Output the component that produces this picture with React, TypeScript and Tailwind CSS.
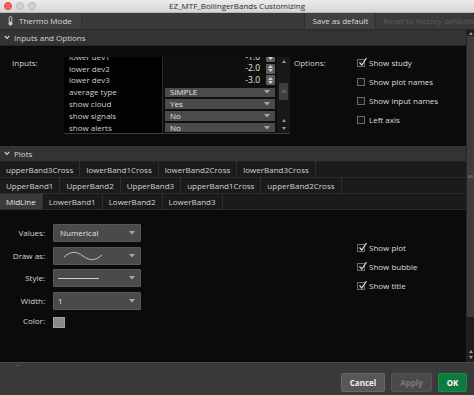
import { ReactNode } from 'react';

type InputRow = { name: string; num?: string; sel?: string };

const inputs: InputRow[] = [
  { name: 'lower dev1', num: '-1.0' },
  { name: 'lower dev2', num: '-2.0' },
  { name: 'lower dev3', num: '-3.0' },
  { name: 'average type', sel: 'SIMPLE' },
  { name: 'show cloud', sel: 'Yes' },
  { name: 'show signals', sel: 'No' },
  { name: 'show alerts', sel: 'No' },
];

const tabRows = [
  ['upperBand3Cross', 'lowerBand1Cross', 'lowerBand2Cross', 'lowerBand3Cross'],
  ['UpperBand1', 'UpperBand2', 'UpperBand3', 'upperBand1Cross', 'upperBand2Cross'],
  ['MidLine', 'LowerBand1', 'LowerBand2', 'LowerBand3'],
];

function Caret() {
  return (
    <svg width="6" height="4" viewBox="0 0 6 4" className="shrink-0">
      <path d="M0 0 L6 0 L3 3.5 Z" fill="#a8a8a8" />
    </svg>
  );
}

function Chevron() {
  return (
    <svg width="6" height="5" viewBox="0 0 6 5" className="shrink-0">
      <path d="M0.8 1 L3 3.4 L5.2 1" stroke="#cfcfcf" strokeWidth="1.3" fill="none" />
    </svg>
  );
}

function Check({ on, label }: { on?: boolean; label: string }) {
  return (
    <div className="flex items-center h-[19px] gap-[4px]">
      <div className="relative w-[8px] h-[8px] border border-[#6a6a6a] bg-[#141414]">
        {on && (
          <svg width="10" height="10" viewBox="0 0 10 10" className="absolute -top-[3px] left-0">
            <path d="M1.5 5.5 L3.8 8 L8.5 1" stroke="#d8d8d8" strokeWidth="1.2" fill="none" />
          </svg>
        )}
      </div>
      <span className="text-[#dcdcdc]">{label}</span>
    </div>
  );
}

function Section({ title }: { title: string }) {
  return (
    <div className="h-[16px] bg-[#333333] flex items-center gap-[4px] pl-[4px] text-[#d6d6d6] border-b border-[#262626]">
      <Chevron />
      <span>{title}</span>
    </div>
  );
}

function Select({ children }: { children: ReactNode }) {
  return (
    <div className="w-[88px] h-[18px] bg-[#4a4a4a] border border-[#575757] rounded-[1px] flex items-center justify-between pl-[6px] pr-[5px] text-[#e2e2e2]">
      <div className="flex items-center">{children}</div>
      <Caret />
    </div>
  );
}

function Field({ label, children }: { label: string; children: ReactNode }) {
  return (
    <div className="flex items-center">
      <span className="w-[45px] text-right text-[#d6d6d6]">{label}</span>
      <div className="ml-[8px]">{children}</div>
    </div>
  );
}

function Spinner() {
  return (
    <div className="w-[9px] h-[10px] bg-[#5d5d5d] rounded-[1px] flex flex-col items-center justify-center gap-[1px]">
      <svg width="5" height="3" viewBox="0 0 5 3"><path d="M0 3 L5 3 L2.5 0 Z" fill="#d0d0d0" /></svg>
      <svg width="5" height="3" viewBox="0 0 5 3"><path d="M0 0 L5 0 L2.5 3 Z" fill="#d0d0d0" /></svg>
    </div>
  );
}

export default function App() {
  return (
    <div className="w-[474px] h-[395px] overflow-hidden bg-[#0b0b0b] flex flex-col font-['Open_Sans','DejaVu_Sans',sans-serif] text-[8px] leading-none">
      {/* window title */}
      <div className="h-[13px] bg-gradient-to-b from-[#ececec] to-[#d6d6d6] border-b border-[#b8b8b8] flex items-center relative">
        <div className="flex gap-[4px] pl-[4px] relative z-10">
          <div className="w-[8px] h-[8px] rounded-full bg-[#fc5f57] border border-[#e0443e]" />
          <div className="w-[8px] h-[8px] rounded-full bg-[#d0d0d0] border border-[#bcbcbc]" />
          <div className="w-[8px] h-[8px] rounded-full bg-[#d0d0d0] border border-[#bcbcbc]" />
        </div>
        <div className="absolute inset-0 flex items-center justify-center text-[#2c2c2c]">
          EZ_MTF_BollingerBands Customizing
        </div>
      </div>

      {/* toolbar */}
      <div className="h-[17px] bg-[#3a3a3a] flex items-center border-b border-[#2a2a2a]">
        <div className="h-full flex items-center gap-[6px] pl-[8px] pr-[9px] bg-[#404040] border-r border-[#2e2e2e] text-[#dadada]">
          <svg width="5" height="10" viewBox="0 0 5 10">
            <rect x="1.2" y="0.5" width="2.6" height="6" rx="1.3" fill="none" stroke="#cfcfcf" strokeWidth="0.9" />
            <circle cx="2.5" cy="7.6" r="2" fill="#cfcfcf" />
          </svg>
          <span>Thermo Mode</span>
        </div>
        <div className="flex-1" />
        <div className="h-full flex items-center px-[7px] bg-[#404040] border-x border-[#2e2e2e] text-[#dadada]">
          Save as default
        </div>
        <div className="h-full flex items-center pl-[7px] text-[#5a5a5a] whitespace-nowrap">
          Reset to factory defaults
        </div>
      </div>

      {/* body */}
      <div className="flex h-[332px]">
        <div className="w-[466px] flex flex-col">
          <Section title="Inputs and Options" />

          <div className="h-[100px] flex pt-[11px]">
            <div className="w-[64px] pl-[12px] pt-[2px] text-[#d6d6d6]">Inputs:</div>
            <div className="w-[226px] h-[77px] flex overflow-hidden border-b border-[#3c3c3c]">
              <div className="w-[213px] overflow-hidden">
                <div className="-mt-[6px]">
                  {inputs.map((r) => (
                    <div key={r.name} className="h-[11.8px] flex items-center">
                      <div className="w-[99px] h-full bg-[#020202] flex items-center pl-[5px] text-[#cfcfcf] border-r border-[#2c2c2c]">
                        {r.name}
                      </div>
                      <div className="flex-1 h-full bg-[#0f0f0f] flex items-center pl-[2px]">
                        {r.num ? (
                          <div className="flex-1 flex items-center justify-end gap-[6px] pr-[2px] text-[#e6e6e6] text-[8.5px]">
                            <span>{r.num}</span>
                            <Spinner />
                          </div>
                        ) : (
                          <div className="w-[110px] h-[9.5px] bg-[#4b4b4b] flex items-center justify-between pl-[5px] pr-[5px] text-[#e6e6e6]">
                            <span>{r.sel}</span>
                            <Caret />
                          </div>
                        )}
                      </div>
                    </div>
                  ))}
                </div>
              </div>
              <div className="w-[13px] bg-[#181818] flex flex-col items-center justify-between py-[3px]">
                <svg width="4" height="3" viewBox="0 0 4 3"><path d="M0 3 L4 3 L2 0 Z" fill="#9a9a9a" /></svg>
                <div className="w-[9px] h-[17px] bg-[#3e3e3e] rounded-[1px] flex items-center justify-center">
                  <div className="w-[4px] h-[3px] bg-[#5c5c5c]" />
                </div>
                <div className="flex flex-col gap-[5px]">
                  <svg width="4" height="3" viewBox="0 0 4 3"><path d="M0 3 L4 3 L2 0 Z" fill="#9a9a9a" /></svg>
                  <svg width="4" height="3" viewBox="0 0 4 3"><path d="M0 0 L4 0 L2 3 Z" fill="#9a9a9a" /></svg>
                </div>
              </div>
            </div>
            <div className="ml-[4px] w-[63px] pt-[2px] text-[#d6d6d6]">Options:</div>
            <div className="-mt-[4px]">
              <Check on label="Show study" />
              <Check label="Show plot names" />
              <Check label="Show input names" />
              <Check label="Left axis" />
            </div>
          </div>

          <Section title="Plots" />
          {tabRows.map((row, i) => (
            <div key={i} className="h-[16px] flex bg-[#1b1b1b] border-b border-[#2c2c2c]">
              {row.map((t) => (
                <div
                  key={t}
                  className={
                    'h-full flex items-center px-[6px] border-r border-[#2e2e2e] ' +
                    (t === 'MidLine' ? 'bg-[#3b3b3b] text-[#e4e4e4]' : 'text-[#d2d2d2]')
                  }
                >
                  {t}
                </div>
              ))}
            </div>
          ))}

          <div className="flex-1 flex">
            <div className="w-[357px] pt-[14px] flex flex-col gap-[4.5px]">
              <Field label="Values:">
                <Select>
                  <span>Numerical</span>
                </Select>
              </Field>
              <Field label="Draw as:">
                <Select>
                  <svg width="40" height="10" viewBox="0 0 40 10" className="ml-[3px]">
                    <path d="M1 6 C8 0, 13 0, 20 5 S32 10, 39 4" stroke="#cfcfcf" strokeWidth="0.9" fill="none" />
                  </svg>
                </Select>
              </Field>
              <Field label="Style:">
                <Select>
                  <div className="w-[41px] h-px bg-[#cfcfcf] -ml-[2px]" />
                </Select>
              </Field>
              <Field label="Width:">
                <Select>
                  <span className="-ml-[2px]">1</span>
                </Select>
              </Field>
              <Field label="Color:">
                <div className="w-[12px] h-[11px] bg-[#8a8a8a] border border-[#a0a0a0] mt-[3px]" />
              </Field>
            </div>
            <div className="pt-[28px]">
              <Check on label="Show plot" />
              <Check on label="Show bubble" />
              <Check on label="Show title" />
            </div>
          </div>
        </div>

        {/* main scrollbar */}
        <div className="w-[8px] bg-[#1e1e1e] flex flex-col border-l border-[#262626]">
          <div className="h-[6px] flex items-center justify-center">
            <svg width="4" height="3" viewBox="0 0 4 3"><path d="M0 3 L4 3 L2 0 Z" fill="#9a9a9a" /></svg>
          </div>
          <div className="h-[281px] bg-[#3d3d3d] flex items-center justify-center">
            <div className="w-[5px] h-[3px] bg-[#5a5a5a]" />
          </div>
          <div className="flex-1" />
          <div className="flex flex-col items-center gap-[3px] pb-[3px]">
            <svg width="4" height="3" viewBox="0 0 4 3"><path d="M0 3 L4 3 L2 0 Z" fill="#9a9a9a" /></svg>
            <svg width="4" height="3" viewBox="0 0 4 3"><path d="M0 0 L4 0 L2 3 Z" fill="#9a9a9a" /></svg>
          </div>
        </div>
      </div>

      {/* footer */}
      <div className="flex-1 bg-[#3a3a3a] border-t border-[#4c4c4c] flex items-end justify-end gap-[6px] pr-[7px] pb-[3px] relative">
        <div className="absolute left-[17px] top-[2px] flex gap-[1px]">
          <div className="w-[1px] h-[1px] bg-[#777]" />
          <div className="w-[1px] h-[1px] bg-[#777]" />
        </div>
        <div className="w-[44px] h-[19px] bg-[#575757] border border-[#686868] rounded-[2px] flex items-center justify-center text-[#efefef] font-bold">
          Cancel
        </div>
        <div className="w-[41px] h-[19px] bg-[#4a4a4a] border border-[#555] rounded-[2px] flex items-center justify-center text-[#7a7a7a] font-bold">
          Apply
        </div>
        <div className="w-[29px] h-[19px] bg-[#0e7a3e] border border-[#14904b] rounded-[2px] flex items-center justify-center text-white font-bold">
          OK
        </div>
      </div>
    </div>
  );
}
